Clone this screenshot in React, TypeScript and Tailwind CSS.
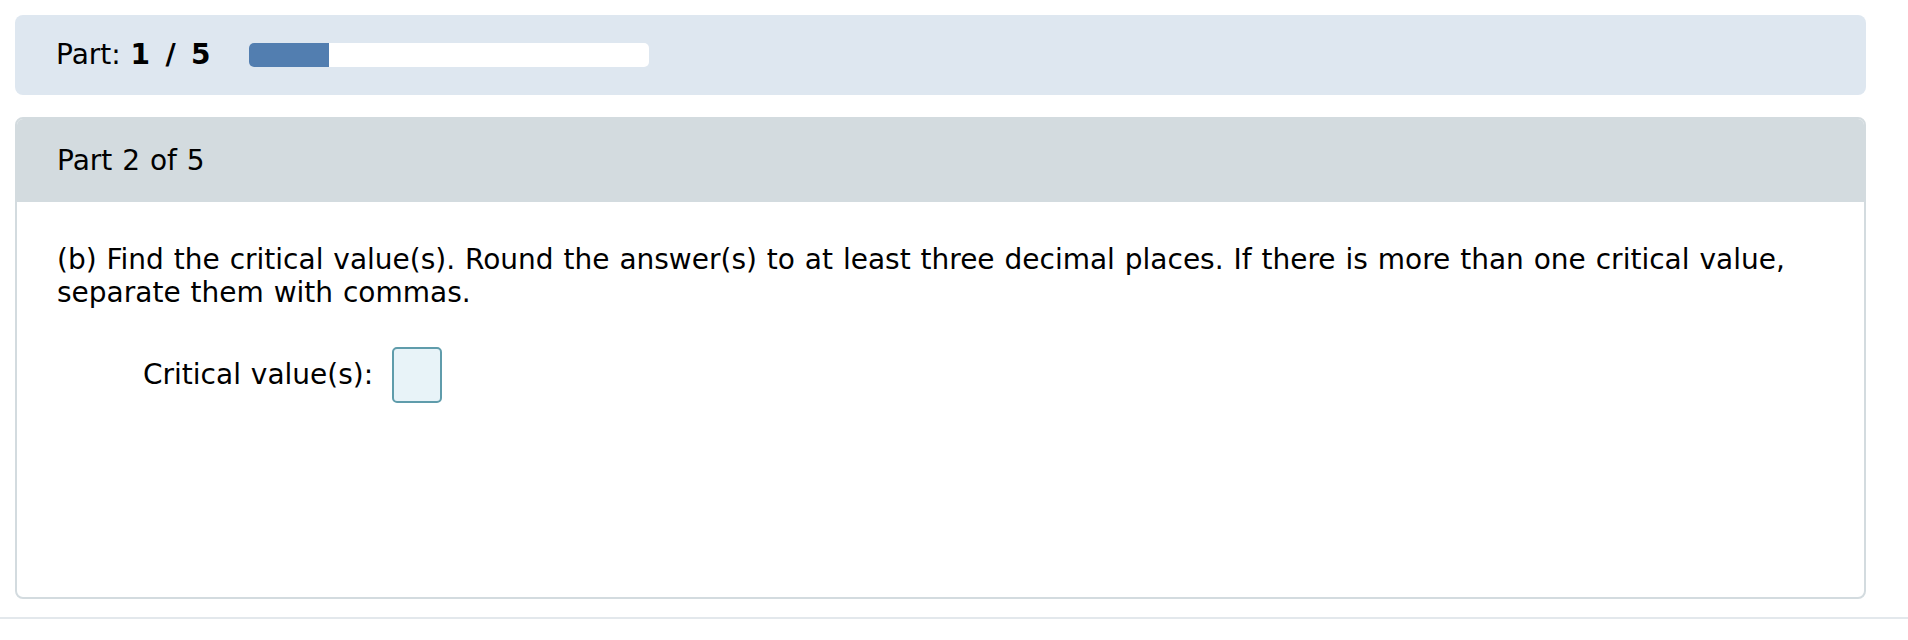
export default function App() {
  return (
    <div className="w-[1908px] h-[640px] bg-white text-black [word-spacing:1px]" style={{ fontFamily: '"DejaVu Sans", Verdana, sans-serif' }}>
      <div className="pl-[15px] pr-[42px] pt-[15px]">
        <div className="h-[80px] rounded-[8px] bg-[#dee7f0] flex items-center pl-[41px]">
          <span className="text-[28px] leading-none">Part: <b className="[word-spacing:4px] tracking-[0.8px]">1 / 5</b></span>
          <div className="ml-[38px] w-[400px] h-[24px] rounded-[5px] bg-white overflow-hidden">
            <div className="h-full w-[80px] bg-[#527eb0]" />
          </div>
        </div>
        <div className="mt-[22px] h-[482px] rounded-[8px] border-2 border-[#d3dbdf] flex flex-col overflow-hidden">
          <div className="h-[83px] bg-[#d3dbdf] flex items-center pl-[40px] text-[28px]">Part 2 of 5</div>
          <div className="pl-[40px] pr-[40px] pt-[41px]">
            <p className="text-[28px] leading-[33px]">
              (b) Find the critical value(s). Round the answer(s) to at least three decimal places. If there is more than one critical value, separate them with commas.
            </p>
            <div className="mt-[38px] pl-[86px] flex items-center gap-[19px]">
              <span className="text-[28px]">Critical value(s):</span>
              <div className="w-[50px] h-[56px] rounded-[5px] border-2 border-[#5f9cab] bg-[#e8f3f8]" />
            </div>
          </div>
        </div>
      </div>
      <div className="mt-[18px] h-[2px] bg-[#e3e8ec]" />
    </div>
  );
}
